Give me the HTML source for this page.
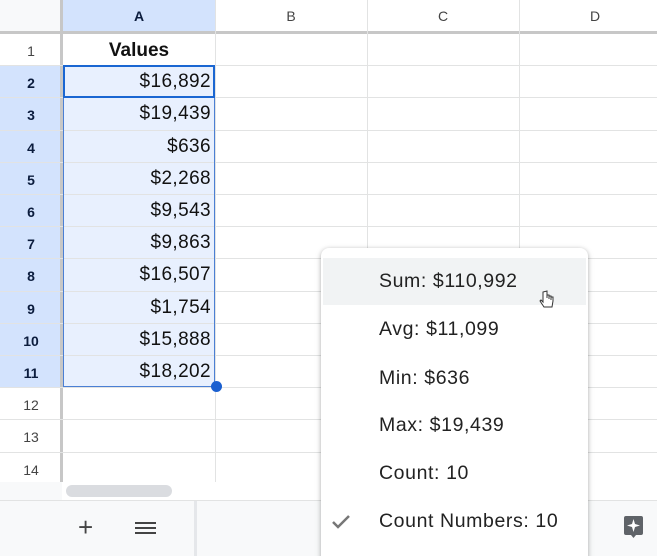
<!DOCTYPE html>
<html style="overflow:hidden;height:556px"><head><style>
body{margin:0;width:657px;height:556px;overflow:hidden;background:#fff;font-family:"Liberation Sans",Arial,sans-serif;position:relative}
.a{position:absolute}
.hl{position:absolute;height:1px;background:#e2e3e3}
.vl{position:absolute;width:1px;background:#e2e3e3}
.rh{position:absolute;left:0;width:62px;text-align:center;font-size:14px;color:#444}
.rs{color:#0b1c3d;font-weight:bold}
.cell{position:absolute;left:63px;width:148px;text-align:right;font-size:19px;letter-spacing:0.4px;color:#111}
.mi{position:absolute;left:379px;font-size:19.5px;letter-spacing:0.6px;color:#222}
</style></head><body>
<div class="a" style="left:0;top:0;width:62px;height:33px;background:#f8f9fa"></div>
<div class="a" style="left:63px;top:0;width:152px;height:33px;background:#d3e3fd"></div>
<div class="a" style="left:0;top:31px;width:657px;height:3px;background:#c7c7c7"></div>
<div class="a" style="left:0;top:66px;width:60px;height:321px;background:#d3e3fd"></div>
<div class="a" style="left:60px;top:0;width:3px;height:482px;background:#c7c7c7"></div>
<div class="a" style="left:63px;top:8px;width:152px;text-align:center;font-size:14px;font-weight:bold;color:#0b1c3d">A</div>
<div class="a" style="left:215px;top:8px;width:152px;text-align:center;font-size:14px;color:#444">B</div>
<div class="a" style="left:367px;top:8px;width:152px;text-align:center;font-size:14px;color:#444">C</div>
<div class="a" style="left:519px;top:8px;width:152px;text-align:center;font-size:14px;color:#444">D</div>
<div class="vl" style="left:215px;top:0;height:482px"></div>
<div class="vl" style="left:367px;top:0;height:482px"></div>
<div class="vl" style="left:519px;top:0;height:482px"></div>
<div class="a" style="left:63px;top:66px;width:152px;height:321px;background:#e8f0fe"></div>
<div id="rows"></div>
<div class="a" style="left:63px;top:65px;width:152px;height:322px;border:1px solid #4a7fd4;box-sizing:border-box"></div>
<div class="a" style="left:63px;top:65px;width:152px;height:33px;border:2px solid #1a66d2;box-sizing:border-box"></div>
<div class="a" style="left:211px;top:381px;width:11px;height:11px;border-radius:50%;background:#1a5fd0"></div>
<div class="a" style="left:0;top:482px;width:657px;height:18px;background:#fff"></div>
<div class="a" style="left:0;top:482px;width:62px;height:18px;background:#f8f9fa"></div>
<div class="a" style="left:66px;top:485px;width:106px;height:12px;border-radius:6px;background:#dadce0"></div>
<div class="a" style="left:0;top:500px;width:657px;height:56px;background:#f8f9fa;border-top:1px solid #e2e3e3"></div>
<div class="a" style="left:194px;top:501px;width:3px;height:55px;background:#e5e7ea"></div>
<div class="a" style="left:78px;top:512px;font-size:26px;color:#444">+</div>
<div class="a" style="left:135px;top:522px;width:21px;height:2px;background:#444;box-shadow:0 5px 0 #444,0 10px 0 #444"></div>
<div class="a" style="left:624px;top:516px;width:19px;height:19px;background:#5f6368;border-radius:2px"></div>
<svg class="a" style="left:624px;top:516px" width="19" height="22"><path d="M9.5 3 L11 8 L16 9.5 L11 11 L9.5 16 L8 11 L3 9.5 L8 8Z" fill="#fff"/><path d="M7 19 L9.5 22 L12 19Z" fill="#5f6368"/></svg>
<div class="a" style="left:321px;top:248px;width:267px;height:320px;background:#fff;border-radius:8px;box-shadow:0 1px 4px rgba(0,0,0,.25),0 2px 8px rgba(0,0,0,.1)"></div>
<div class="a" style="left:323px;top:258px;width:263px;height:47px;background:#f1f3f4"></div>
<div class="mi" style="top:270px">Sum: $110,992</div>
<div class="mi" style="top:318px">Avg: $11,099</div>
<div class="mi" style="top:367px">Min: $636</div>
<div class="mi" style="top:414px">Max: $19,439</div>
<div class="mi" style="top:462px">Count: 10</div>
<div class="mi" style="top:510px">Count Numbers: 10</div>
<svg class="a" style="left:331px;top:513px" width="20" height="16"><path d="M2 9 L7 14 L18 3" stroke="#777" stroke-width="2.5" fill="none"/></svg>
<svg class="a" style="left:538px;top:290px" width="18" height="20"><path d="M5 2 v10 l-2-2 -1 1 4 6 h8 l1-6 v-4 h-2 v3 -4 h-2 v3 -4 h-2 v3 -7z" fill="#fff" stroke="#333" stroke-width="1"/></svg>
<script>
var vals=["","$16,892","$19,439","$636","$2,268","$9,543","$9,863","$16,507","$1,754","$15,888","$18,202","","",""];
var h="";
for(var n=1;n<=14;n++){var t=34+(n-1)*32.2;var b=t+32.2;
h+='<div class="rh'+(n>=2&&n<=11?' rs':'')+'" style="top:'+(t+9)+'px">'+n+'</div>';
h+='<div class="hl" style="left:0;width:657px;top:'+(b-1)+'px"></div>';
if(n==1)h+='<div class="a" style="left:63px;width:152px;top:'+(t+6)+'px;text-align:center;font-size:19px;font-weight:bold;color:#111">Values</div>';
else if(vals[n-1])h+='<div class="cell" style="top:'+(t+5)+'px">'+vals[n-1]+'</div>';}
document.getElementById('rows').innerHTML=h;
</script>
</body></html>
